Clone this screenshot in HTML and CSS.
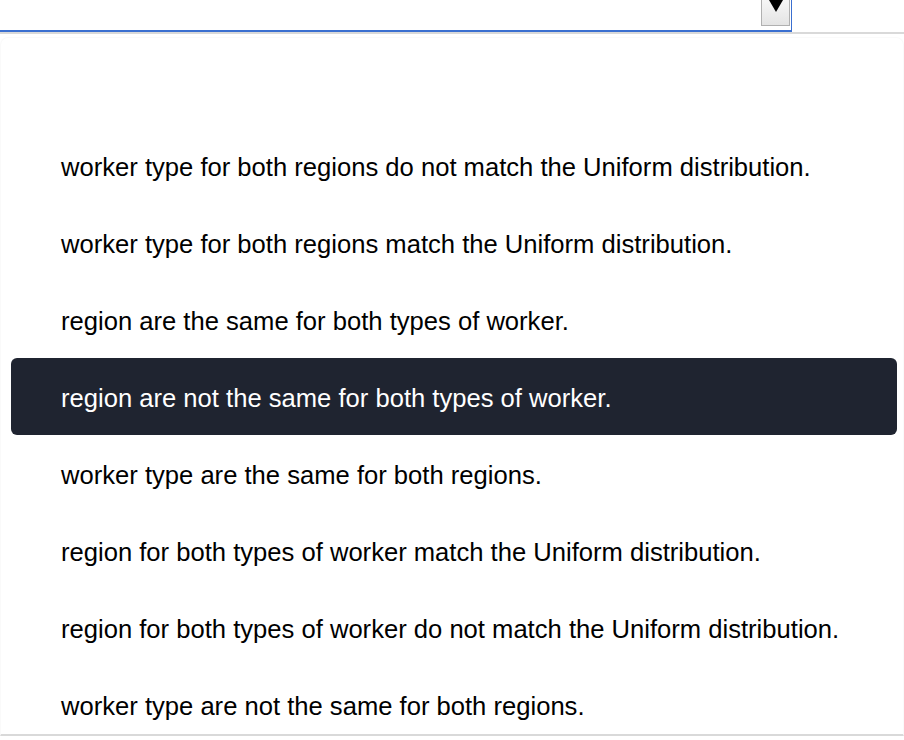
FILE: index.html
```html
<!DOCTYPE html>
<html lang="en">
<head>
    <meta charset="UTF-8">
    <title>Answer choices</title>
    <link rel="stylesheet" href="styles.css">
</head>
<body>
    <div class="select-bar">
        <div class="select-box">
            <div class="select-btn">
                <svg width="14" height="12" viewBox="0 0 14 12"><polygon points="0,0 14,0 7,12" fill="#000"/></svg>
            </div>
        </div>
    </div>

    <div class="option-panel">
        <ul class="option-list">
            <li class="option">worker type for both regions do not match the Uniform distribution.</li>
            <li class="option">worker type for both regions match the Uniform distribution.</li>
            <li class="option">region are the same for both types of worker.</li>
            <li class="option selected">region are not the same for both types of worker.</li>
            <li class="option">worker type are the same for both regions.</li>
            <li class="option">region for both types of worker match the Uniform distribution.</li>
            <li class="option">region for both types of worker do not match the Uniform distribution.</li>
            <li class="option">worker type are not the same for both regions.</li>
        </ul>
    </div>
</body>
</html>
```

FILE: styles.css
```css
* {
    margin: 0;
    padding: 0;
    box-sizing: border-box;
}

body {
    background: #fff;
    color: #000;
    font-family: 'Liberation Sans', Arial, sans-serif;
    overflow: hidden;
    height: 100vh;
}

/* top select control, scrolled mostly out of view */
.select-bar {
    height: 34px;
    border-bottom: 2px solid #d9d9d9;
}

.select-box {
    width: 792px;
    height: 32px;
    border-right: 1px solid #3a6fd0;
    border-bottom: 2px solid #3a6fd0;
    display: flex;
    justify-content: flex-end;
    padding-right: 1px;
}

.select-btn {
    width: 29px;
    height: 26px;
    background: linear-gradient(to bottom, #f6f6f6, #e4e4e4);
    border: 1px solid #b0b0b0;
    border-top: none;
    display: flex;
    justify-content: center;
    align-items: flex-start;
}

.option-panel {
    height: 699px;
    margin-top: 3px;
    border: 1px solid #fafafa;
    border-bottom: 2px solid #d9d9d9;
    border-radius: 8px 8px 0 0;
    overflow: hidden;
    padding: 89px 6px 0 10px;
}

.option-list {
    list-style: none;
}

.option {
    height: 77px;
    display: flex;
    align-items: center;
    padding: 4px 0 0 50px;
    font-size: 25.6px;
    border-radius: 6px;
}

.option.selected {
    background: #1f2430;
    color: #fff;
}
```
